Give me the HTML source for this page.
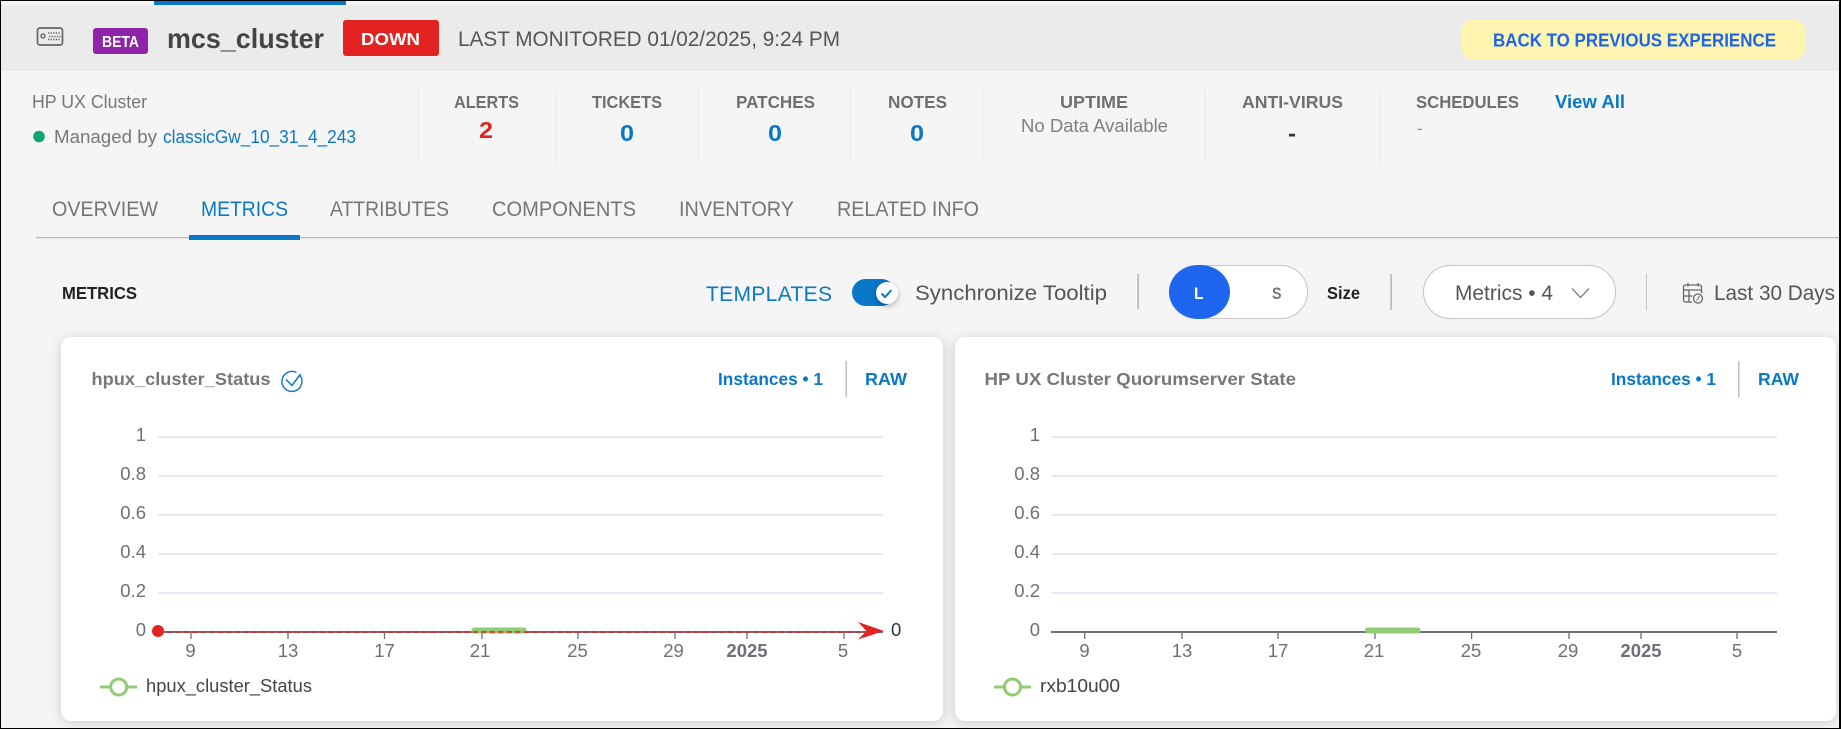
<!DOCTYPE html>
<html><head><meta charset="utf-8"><title>mcs_cluster</title>
<style>
html,body{margin:0;padding:0;width:1841px;height:729px;overflow:hidden;background:#f5f5f5}
#w{position:relative;width:1841px;height:729px;overflow:hidden;background:#f5f5f5}
.a{position:absolute;box-sizing:border-box}
svg{position:absolute;left:0;top:0}
text{font-family:"Liberation Sans",sans-serif}
.b{font-weight:700}
.hd{font-size:17.5px;font-weight:700;fill:#6f6f6f}
.tab{font-size:21.5px;fill:#757575}
.blue{fill:#0a78c8}
.y{font-size:18.5px;fill:#6e7079}
.x{font-size:18.5px;fill:#6e7079}
.ct{font-size:17.5px;font-weight:700;fill:#777}
.lk{font-size:17.5px;font-weight:700;fill:#0a78c8}
.grid{stroke:#e4e9f3;stroke-width:2}
.tick{stroke:#6e7079;stroke-width:1.3}
</style></head><body><div id="w">
<div class="a" style="left:0;top:5px;width:1841px;height:66px;background:#ebebeb"></div>
<div class="a" style="left:154px;top:1px;width:192px;height:4px;background:#0a78c8"></div>
<div class="a" style="left:93px;top:28px;width:55px;height:26px;background:#8f24a8;border-radius:3px"></div>
<div class="a" style="left:343px;top:20px;width:96px;height:36px;background:#e32222;border-radius:3px"></div>
<div class="a" style="left:1462px;top:20px;width:343px;height:39px;background:#fdf5b0;border-radius:10px"></div>
<div class="a" style="left:1169px;top:265px;width:139px;height:54px;background:#fff;border:1px solid #c4c4c4;border-radius:27px"></div>
<div class="a" style="left:1169px;top:265px;width:61px;height:54px;background:#1e66f0;border-radius:30px/27px"></div>
<div class="a" style="left:1423px;top:265px;width:193px;height:54px;background:#fff;border:1px solid #c4c4c4;border-radius:27px"></div>
<div class="a" style="left:852px;top:279px;width:43px;height:27px;background:#0a78c8;border-radius:14px"></div>
<div class="a" style="left:876px;top:282px;width:22px;height:22px;background:#fff;border-radius:50%;box-shadow:0 2px 6px rgba(0,0,0,.28)"></div>
<div class="a" style="left:61px;top:337px;width:882px;height:384px;background:#fff;border-radius:10px;box-shadow:0 2px 12px rgba(0,0,0,.17)"></div>
<div class="a" style="left:955px;top:337px;width:881px;height:384px;background:#fff;border-radius:10px;box-shadow:0 2px 12px rgba(0,0,0,.17)"></div>

<svg width="1841" height="729" viewBox="0 0 1841 729">
<!-- device icon -->
<rect x="37.5" y="28" width="25" height="17" rx="2.5" fill="none" stroke="#666" stroke-width="1.7"/>
<circle cx="43" cy="36" r="2" fill="none" stroke="#555" stroke-width="1.3"/>
<path d="M48 33h12M49 36.500h12M48 39.500h12" stroke="#666" stroke-width="1.4" stroke-dasharray="1.300 1.300" fill="none"/>

<text x="102" y="47" class="b" font-size="15.500" fill="#fff" textLength="37" lengthAdjust="spacingAndGlyphs">BETA</text>
<text x="167" y="48" class="b" font-size="27.500" fill="#444" textLength="157" lengthAdjust="spacingAndGlyphs">mcs_cluster</text>
<text x="361" y="45" class="b" font-size="17.500" fill="#fff" textLength="59" lengthAdjust="spacingAndGlyphs">DOWN</text>
<text x="458" y="46" font-size="21.500" fill="#555" textLength="382" lengthAdjust="spacingAndGlyphs">LAST MONITORED 01/02/2025, 9:24 PM</text>
<text x="1493" y="46.500" class="b" font-size="18" fill="#1c64e8" textLength="283" lengthAdjust="spacingAndGlyphs">BACK TO PREVIOUS EXPERIENCE</text>

<text x="32" y="108" font-size="18" fill="#777" textLength="115" lengthAdjust="spacingAndGlyphs">HP UX Cluster</text>
<circle cx="39" cy="136.500" r="5.800" fill="#0fa66e"/>
<text x="54" y="143" font-size="18" fill="#777" textLength="103" lengthAdjust="spacingAndGlyphs">Managed by</text>
<text x="163" y="143" font-size="18" fill="#0a78c8" textLength="193" lengthAdjust="spacingAndGlyphs">classicGw_10_31_4_243</text>

<g stroke="#e6e6e6" stroke-width="1">
<path d="M418 89v73M556 89v73M698 89v73M850 89v73M983 89v73M1205 89v73M1380 89v73"/>
</g>
<text x="454" y="108" class="hd" textLength="65" lengthAdjust="spacingAndGlyphs">ALERTS</text>
<text x="479" y="138" class="b" font-size="23" fill="#e32222" textLength="14" lengthAdjust="spacingAndGlyphs">2</text>
<text x="592" y="108" class="hd" textLength="70" lengthAdjust="spacingAndGlyphs">TICKETS</text>
<text x="620" y="141" class="b blue" font-size="23" textLength="14" lengthAdjust="spacingAndGlyphs">0</text>
<text x="768" y="141" class="b blue" font-size="23" textLength="14" lengthAdjust="spacingAndGlyphs">0</text>
<text x="736" y="108" class="hd" textLength="79" lengthAdjust="spacingAndGlyphs">PATCHES</text>
<text x="888" y="108" class="hd" textLength="59" lengthAdjust="spacingAndGlyphs">NOTES</text>
<text x="910" y="141" class="b blue" font-size="23" textLength="14" lengthAdjust="spacingAndGlyphs">0</text>
<text x="1060" y="108" class="hd" textLength="68" lengthAdjust="spacingAndGlyphs">UPTIME</text>
<text x="1021" y="132" font-size="18" fill="#808080" textLength="147" lengthAdjust="spacingAndGlyphs">No Data Available</text>
<text x="1242" y="108" class="hd" textLength="101" lengthAdjust="spacingAndGlyphs">ANTI-VIRUS</text>
<text x="1288" y="141" class="b" font-size="23" fill="#333" textLength="8" lengthAdjust="spacingAndGlyphs">-</text>
<text x="1416" y="108" class="hd" textLength="103" lengthAdjust="spacingAndGlyphs">SCHEDULES</text>
<text x="1555" y="108" class="b blue" font-size="18" textLength="70" lengthAdjust="spacingAndGlyphs">View All</text>
<text x="1417" y="134" font-size="17" fill="#888" textLength="5.500" lengthAdjust="spacingAndGlyphs">-</text>

<!-- tabs -->
<text x="52" y="216" class="tab" textLength="106" lengthAdjust="spacingAndGlyphs">OVERVIEW</text>
<text x="201" y="216" class="tab blue" style="fill:#0a78c8" textLength="87" lengthAdjust="spacingAndGlyphs">METRICS</text>
<text x="330" y="216" class="tab" textLength="119" lengthAdjust="spacingAndGlyphs">ATTRIBUTES</text>
<text x="492" y="216" class="tab" textLength="144" lengthAdjust="spacingAndGlyphs">COMPONENTS</text>
<text x="679" y="216" class="tab" textLength="115" lengthAdjust="spacingAndGlyphs">INVENTORY</text>
<text x="837" y="216" class="tab" textLength="142" lengthAdjust="spacingAndGlyphs">RELATED INFO</text>
<rect x="36" y="237" width="1805" height="1.300" fill="#bbb"/>
<rect x="189" y="235" width="111" height="5" fill="#0a78c8"/>

<!-- toolbar -->
<text x="62" y="299" class="b" font-size="17.500" fill="#222" textLength="75" lengthAdjust="spacingAndGlyphs">METRICS</text>
<text x="706" y="301" font-size="21" fill="#0a78c8" textLength="126" lengthAdjust="spacing">TEMPLATES</text>
<path d="M881.500 293.500l3.500 3.500 6.500-7" fill="none" stroke="#0a78c8" stroke-width="2"/>
<text x="915" y="300" font-size="21" fill="#555" textLength="192" lengthAdjust="spacingAndGlyphs">Synchronize Tooltip</text>
<rect x="1137.300" y="274" width="1.700" height="35" fill="#bbb"/>
<text x="1194" y="299" class="b" font-size="17" fill="#fff" textLength="9.500" lengthAdjust="spacingAndGlyphs">L</text>
<text x="1272" y="299" class="b" font-size="17" fill="#777" textLength="9.500" lengthAdjust="spacingAndGlyphs">S</text>
<text x="1327" y="299" class="b" font-size="17.500" fill="#222" textLength="33" lengthAdjust="spacingAndGlyphs">Size</text>
<rect x="1390.300" y="274" width="1.700" height="36" fill="#bbb"/>
<text x="1455" y="300" font-size="21" fill="#555" textLength="98" lengthAdjust="spacingAndGlyphs">Metrics • 4</text>
<path d="M1572 288.500l8.500 9 8.500-9" fill="none" stroke="#666" stroke-width="1.100"/>
<rect x="1646" y="274" width="1" height="36" fill="#c4c4c4"/>
<path d="M1692 302h-6.500a2 2 0 0 1-2-2v-13a2 2 0 0 1 2-2h14a2 2 0 0 1 2 2v6M1683.500 290h18.500M1683.500 296h9M1689 290v12M1688 283v3.500M1698 283v3.500" fill="none" stroke="#666" stroke-width="1.300"/>
<circle cx="1698" cy="298.500" r="4.500" fill="none" stroke="#666" stroke-width="1.300"/>
<path d="M1699.500 296l-1.500 2.500-1.500 2" fill="none" stroke="#666" stroke-width="1"/>
<text x="1714" y="300" font-size="21" fill="#555" textLength="121" lengthAdjust="spacingAndGlyphs">Last 30 Days</text>

<!-- card 1 -->
<text x="91.500" y="385" class="ct" textLength="179" lengthAdjust="spacingAndGlyphs">hpux_cluster_Status</text>
<path d="M300 375.500a10 10 0 1 1-3.500-3" fill="none" stroke="#0a78c8" stroke-width="1.400"/>
<path d="M286 379.500l6 6 8.500-11.500" fill="none" stroke="#0a78c8" stroke-width="1.500"/>
<text x="718" y="385" class="lk" textLength="105" lengthAdjust="spacingAndGlyphs">Instances • 1</text>
<rect x="845.500" y="361" width="1.400" height="36" fill="#bbb"/>
<text x="865" y="385" class="lk" textLength="42" lengthAdjust="spacingAndGlyphs">RAW</text>
<path class="grid" d="M158 437H883M158 476H883M158 515H883M158 554H883M158 593H883"/>
<g class="y" text-anchor="end">
<text x="146" y="441">1</text><text x="146" y="480">0.8</text><text x="146" y="519">0.6</text><text x="146" y="558">0.4</text><text x="146" y="597">0.2</text><text x="146" y="636">0</text>
</g>
<path d="M158 632H883" stroke="#6e7079" stroke-width="2"/>
<path class="tick" d="M191 632v7M288 632v7M384.500 632v7M482 632v7M578 632v7M675 632v7M747 632v7M844 632v7"/>
<g class="x" text-anchor="middle">
<text x="190.500" y="657">9</text><text x="288" y="657">13</text><text x="384.500" y="657">17</text><text x="480" y="657">21</text><text x="577.500" y="657">25</text><text x="673.500" y="657">29</text><text x="747" y="657" font-weight="700">2025</text><text x="843" y="657">5</text>
</g>
<rect x="471.500" y="627.500" width="55" height="6" rx="2.700" fill="#91cc75"/>
<path d="M158 632H866" stroke="#e32222" stroke-width="1.500" stroke-dasharray="5.500 3"/>
<circle cx="158" cy="631" r="6" fill="#e32222"/>
<path d="M858 622L884 631L858 639.500L866.500 631Z" fill="#e32222"/>
<text x="891" y="636" font-size="18.500" fill="#333">0</text>
<path d="M100 687H137" stroke="#91cc75" stroke-width="3"/>
<circle cx="118.700" cy="687" r="8" fill="#fff" stroke="#91cc75" stroke-width="3"/>
<text x="146" y="692" font-size="18.500" fill="#444" textLength="166" lengthAdjust="spacingAndGlyphs">hpux_cluster_Status</text>

<!-- card 2 -->
<text x="984.500" y="385" class="ct" textLength="311.500" lengthAdjust="spacingAndGlyphs">HP UX Cluster Quorumserver State</text>
<text x="1611" y="385" class="lk" textLength="105" lengthAdjust="spacingAndGlyphs">Instances • 1</text>
<rect x="1738" y="361" width="1.400" height="36" fill="#bbb"/>
<text x="1758" y="385" class="lk" textLength="41" lengthAdjust="spacingAndGlyphs">RAW</text>
<path class="grid" d="M1052 437H1777M1052 476H1777M1052 515H1777M1052 554H1777M1052 593H1777"/>
<g class="y" text-anchor="end">
<text x="1040" y="441">1</text><text x="1040" y="480">0.8</text><text x="1040" y="519">0.6</text><text x="1040" y="558">0.4</text><text x="1040" y="597">0.2</text><text x="1040" y="636">0</text>
</g>
<path d="M1051 632H1777" stroke="#6e7079" stroke-width="2"/>
<path class="tick" d="M1084.700 632v7M1182 632v7M1278 632v7M1375 632v7M1471.600 632v7M1569 632v7M1641 632v7M1737 632v7"/>
<g class="x" text-anchor="middle">
<text x="1084.500" y="657">9</text><text x="1182" y="657">13</text><text x="1278" y="657">17</text><text x="1374" y="657">21</text><text x="1471" y="657">25</text><text x="1568" y="657">29</text><text x="1641" y="657" font-weight="700">2025</text><text x="1737" y="657">5</text>
</g>
<rect x="1365" y="627.500" width="55.500" height="6" rx="2.700" fill="#91cc75"/>
<path d="M994 687H1031" stroke="#91cc75" stroke-width="3"/>
<circle cx="1012.500" cy="687" r="8" fill="#fff" stroke="#91cc75" stroke-width="3"/>
<text x="1040" y="692" font-size="18.500" fill="#444" textLength="80" lengthAdjust="spacingAndGlyphs">rxb10u00</text>
</svg>

<!-- screenshot frame -->
<div class="a" style="left:0;top:0;width:1841px;height:1px;background:#000"></div>
<div class="a" style="left:0;top:0;width:1px;height:729px;background:#000"></div>
<div class="a" style="left:1839px;top:0;width:2px;height:729px;background:#000"></div>
<div class="a" style="left:0;top:728px;width:1841px;height:1px;background:#000"></div>
</div></body></html>
